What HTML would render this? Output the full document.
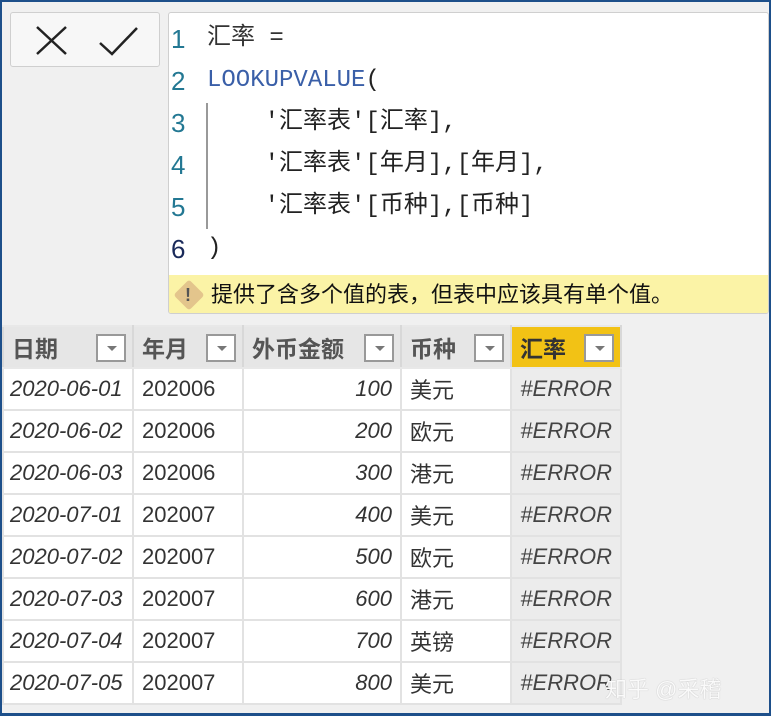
<!DOCTYPE html>
<html><head><meta charset="utf-8"><style>
*{margin:0;padding:0;box-sizing:border-box}
body{width:771px;height:716px;overflow:hidden;background:#f0f0f0;font-family:"Liberation Sans","Noto Sans CJK SC",sans-serif;position:relative}
.frame{position:absolute;left:0;top:0;width:771px;height:716px;border:2px solid #1d4f8a;border-bottom-width:3px}
.btns{position:absolute;left:10px;top:12px;width:150px;height:55px;background:#f7f7f7;border:1px solid #cfcfcf;border-radius:3px}
.ed{position:absolute;left:168px;top:12px;width:601px;height:302px;background:#fff;border:1px solid #cfcfcf;border-radius:3px;overflow:hidden}
.ln{position:absolute;left:2px;font-size:26px;line-height:42px;height:42px;color:#237893;font-family:"Liberation Sans",sans-serif}
.code{position:absolute;left:38px;font-size:24px;line-height:42px;height:42px;color:#222;white-space:pre;font-family:"Liberation Mono","Noto Sans CJK SC",monospace}
.cj{font-size:26px}
.warn{position:absolute;left:0;top:262px;width:601px;height:40px;background:#fbf3a6;font-size:22px;color:#111;padding-left:42px;line-height:40px}
.dia{position:absolute;left:9px;top:9px;width:22px;height:22px;transform:rotate(45deg);background:#e3c58c;border-radius:3px}
.ex{position:absolute;left:16px;top:0;font-size:18px;font-weight:bold;color:#555;line-height:40px}
table{position:absolute;left:2px;top:325px;border-collapse:collapse;font-size:22px}
td,th{height:42px;border:2px solid #e2e2e2;padding:0 8px;white-space:nowrap}
th{background:#e6e6e6;text-align:left;color:#555;font-weight:bold;font-size:23px;position:relative;border-color:#e8e8e8 #d8d8d8}
th .dd{position:absolute;right:6px;top:7px;width:30px;height:28px;background:#fff;border:2px solid #999}
th .dd:after{content:"";position:absolute;left:9px;top:10px;border:5px solid transparent;border-top:5px solid #777}
td{background:#fff;color:#333}
td.d{font-style:italic;padding:0 6px}
td.r{text-align:right;font-style:italic}
td.e{background:#ececec;text-align:right;font-style:italic;color:#444}
th.y{background:#f2c215;color:#333}
</style></head><body>
<div class="frame"></div>
<div class="btns">
<svg width="150" height="55" style="position:absolute;left:0;top:0"><path d="M26 14 L55 41 M55 14 L26 41" stroke="#222" stroke-width="2.5" fill="none"/><path d="M89 30 L101 41 L126 15" stroke="#222" stroke-width="2.5" fill="none"/></svg>
</div>
<div class="ed">
<div class="ln" style="top:5px">1</div><div class="code" style="top:5px;color:#333">汇率 =</div>
<div class="ln" style="top:47px">2</div><div class="code" style="top:47px"><span style="color:#3a5fa8">LOOKUPVALUE</span>(</div>
<div class="ln" style="top:89px">3</div><div class="code" style="top:89px">    '汇率表'[汇率],</div>
<div class="ln" style="top:131px">4</div><div class="code" style="top:131px">    '汇率表'[年月],[年月],</div>
<div class="ln" style="top:173px">5</div><div class="code" style="top:173px">    '汇率表'[币种],[币种]</div>
<div class="ln" style="top:215px;color:#1a2a5a">6</div><div class="code" style="top:215px">)</div>
<div style="position:absolute;left:37px;top:90px;width:2px;height:126px;background:#999"></div>
<div class="warn"><div class="dia"></div><div class="ex">!</div>提供了含多个值的表，但表中应该具有单个值。</div>
</div>
<table>
<tr><th style="width:130px">日期<span class="dd"></span></th><th style="width:110px">年月<span class="dd"></span></th><th style="width:158px">外币金额<span class="dd"></span></th><th style="width:110px">币种<span class="dd"></span></th><th class="y" style="width:110px">汇率<span class="dd"></span></th></tr>
<tr><td class="d">2020-06-01</td><td>202006</td><td class="r">100</td><td>美元</td><td class="e">#ERROR</td></tr>
<tr><td class="d">2020-06-02</td><td>202006</td><td class="r">200</td><td>欧元</td><td class="e">#ERROR</td></tr>
<tr><td class="d">2020-06-03</td><td>202006</td><td class="r">300</td><td>港元</td><td class="e">#ERROR</td></tr>
<tr><td class="d">2020-07-01</td><td>202007</td><td class="r">400</td><td>美元</td><td class="e">#ERROR</td></tr>
<tr><td class="d">2020-07-02</td><td>202007</td><td class="r">500</td><td>欧元</td><td class="e">#ERROR</td></tr>
<tr><td class="d">2020-07-03</td><td>202007</td><td class="r">600</td><td>港元</td><td class="e">#ERROR</td></tr>
<tr><td class="d">2020-07-04</td><td>202007</td><td class="r">700</td><td>英镑</td><td class="e">#ERROR</td></tr>
<tr><td class="d">2020-07-05</td><td>202007</td><td class="r">800</td><td>美元</td><td class="e">#ERROR</td></tr>
</table>
<div style="position:absolute;left:605px;top:672px;font-size:22px;color:#fafafa;text-shadow:0 0 1px #aaa">知乎 @采稽</div>
</body></html>
